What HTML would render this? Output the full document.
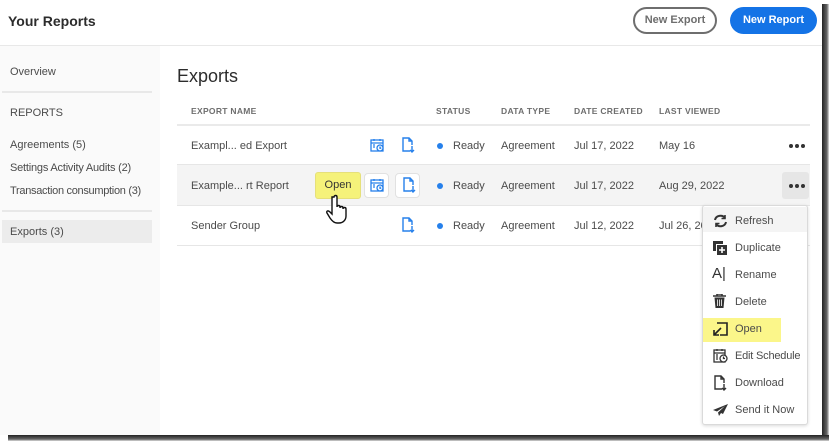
<!DOCTYPE html>
<html><head><meta charset="utf-8"><style>
*{margin:0;padding:0;box-sizing:border-box}
body{width:830px;height:443px;background:#fff;font-family:"Liberation Sans",sans-serif;color:#4b4b4b;position:relative;overflow:hidden}
.a{position:absolute;white-space:nowrap}
.frame{position:absolute;left:0;top:0;width:822px;height:435px;background:#fff;overflow:hidden}
.shr{position:absolute;left:822px;top:4px;width:7px;height:437px;background:linear-gradient(90deg,#222,#666 70%,#ddd)}
.shb{position:absolute;left:8px;top:435px;width:821px;height:6px;background:linear-gradient(180deg,#222,#666 70%,#ddd)}
.t{font-size:11px;color:#4b4b4b}
.h{font-size:8.5px;font-weight:bold;color:#6e6e6e;letter-spacing:.3px}
.dot{width:6px;height:6px;border-radius:50%;background:#2680eb}
.ib{position:absolute;width:25px;height:25px;border:1px solid #e1e1e1;border-radius:4px;background:#fff}
.mi{font-size:11px;color:#4b4b4b;position:absolute;left:32px}
.dots{position:absolute;display:flex;gap:2px}
.dots i{width:4px;height:4px;border-radius:50%;background:#333}
</style></head><body>
<div class="frame">
 <div class="a" style="left:8px;top:13px;font-size:14px;font-weight:bold;color:#2c2c2c">Your Reports</div>
 <div class="a" style="left:633px;top:7px;width:84px;height:27px;border:2px solid #6e6e6e;border-radius:14px;font-size:11px;font-weight:bold;color:#6e6e6e;text-align:center;line-height:23px">New Export</div>
 <div class="a" style="left:730px;top:7px;width:87px;height:27px;background:#1473e6;border-radius:14px;font-size:11px;font-weight:bold;color:#fff;text-align:center;line-height:27px">New Report</div>
 <div class="a" style="left:0;top:45px;width:822px;height:1px;background:#e8e8e8"></div>
 <div class="a" style="left:0;top:46px;width:160px;height:389px;background:#fafafa"></div>
 <div class="a t" style="left:10px;top:66px">Overview</div>
 <div class="a" style="left:2px;top:91px;width:150px;height:2px;background:#e8e8e8"></div>
 <div class="a t" style="left:10px;top:107px">REPORTS</div>
 <div class="a t" style="left:10px;top:139px">Agreements (5)</div>
 <div class="a t" style="left:10px;top:162px;letter-spacing:-.2px">Settings Activity Audits (2)</div>
 <div class="a t" style="left:10px;top:185px;letter-spacing:-.3px">Transaction consumption (3)</div>
 <div class="a" style="left:2px;top:210px;width:150px;height:2px;background:#e8e8e8"></div>
 <div class="a" style="left:2px;top:220px;width:150px;height:23px;background:#ececec"></div>
 <div class="a t" style="left:10px;top:226px">Exports (3)</div>

 <div class="a" style="left:177px;top:66px;font-size:18px;color:#2c2c2c">Exports</div>
 <div class="a h" style="left:191px;top:106px">EXPORT NAME</div>
 <div class="a h" style="left:436px;top:106px">STATUS</div>
 <div class="a h" style="left:501px;top:106px">DATA TYPE</div>
 <div class="a h" style="left:574px;top:106px">DATE CREATED</div>
 <div class="a h" style="left:659px;top:106px">LAST VIEWED</div>
 <div class="a" style="left:177px;top:124px;width:633px;height:2px;background:#eaeaea"></div>
 <div class="a" style="left:177px;top:165px;width:633px;height:40px;background:#f4f4f4"></div>
 <div class="a" style="left:177px;top:164px;width:633px;height:1px;background:#e6e6e6"></div>
 <div class="a" style="left:177px;top:205px;width:633px;height:1px;background:#e6e6e6"></div>
 <div class="a" style="left:177px;top:245px;width:633px;height:1px;background:#e6e6e6"></div>

 <div class="a t" style="left:191px;top:140px">Exampl...  ed Export</div>
 <div class="a t" style="left:191px;top:180px">Example... rt Report</div>
 <div class="a t" style="left:191px;top:220px">Sender Group</div>
 <div class="a" style="left:315px;top:172px;width:46px;height:27px;background:#f5f27a;border:1px solid #e6e07a;border-radius:3px;font-size:11px;color:#333;text-align:center;line-height:25px">Open</div>
 <div class="ib" style="left:364px;top:173px"></div>
 <div class="ib" style="left:395px;top:173px"></div>
 <svg class="a" style="left:370px;top:138px" width="15" height="15" viewBox="0 0 15 15" fill="none" stroke="#2680eb" stroke-width="1.3"><rect x="1" y="2" width="12" height="11"/><path d="M1 5h12M4 1v2M10 1v2M3 7h2M3 9h2"/><circle cx="10" cy="10" r="3" fill="#fff"/><path d="M10 8.5v1.7h1.3"/></svg>
 <svg class="a" style="left:370px;top:178px" width="15" height="15" viewBox="0 0 15 15" fill="none" stroke="#2680eb" stroke-width="1.3"><rect x="1" y="2" width="12" height="11"/><path d="M1 5h12M4 1v2M10 1v2M3 7h2M3 9h2"/><circle cx="10" cy="10" r="3" fill="#fff"/><path d="M10 8.5v1.7h1.3"/></svg>
 <svg class="a" style="left:401px;top:137px" width="14" height="16" viewBox="0 0 14 16" fill="none" stroke="#2680eb" stroke-width="1.4"><path d="M9 14H2V1h6l3 3v4M8 1v3h3M11 9v6M9 13l2 2 2-2"/></svg>
 <svg class="a" style="left:402px;top:177px" width="14" height="16" viewBox="0 0 14 16" fill="none" stroke="#2680eb" stroke-width="1.4"><path d="M9 14H2V1h6l3 3v4M8 1v3h3M11 9v6M9 13l2 2 2-2"/></svg>
 <svg class="a" style="left:401px;top:217px" width="14" height="16" viewBox="0 0 14 16" fill="none" stroke="#2680eb" stroke-width="1.4"><path d="M9 14H2V1h6l3 3v4M8 1v3h3M11 9v6M9 13l2 2 2-2"/></svg>
 <svg class="a" style="left:326px;top:194px" width="26" height="32" viewBox="0 0 26 32"><path d="M8 3c0-2 3-2 3 0v10c0-2 3-2 3 0v1c0-2 3-2 3 0v1c0-2 3-2 3 0v7c0 4-3 7-7 7h-2c-3 0-5-2-7-5l-3-5c-1-2 1-3 3-1l2 2V3z" fill="#fff" stroke="#111" stroke-width="1.4"/></svg>

 <div class="a dot" style="left:437px;top:143px"></div>
 <div class="a dot" style="left:437px;top:183px"></div>
 <div class="a dot" style="left:437px;top:223px"></div>
 <div class="a t" style="left:453px;top:140px">Ready</div>
 <div class="a t" style="left:453px;top:180px">Ready</div>
 <div class="a t" style="left:453px;top:220px">Ready</div>
 <div class="a t" style="left:501px;top:140px">Agreement</div>
 <div class="a t" style="left:501px;top:180px">Agreement</div>
 <div class="a t" style="left:501px;top:220px">Agreement</div>
 <div class="a t" style="left:574px;top:140px">Jul 17, 2022</div>
 <div class="a t" style="left:574px;top:180px">Jul 17, 2022</div>
 <div class="a t" style="left:574px;top:220px">Jul 12, 2022</div>
 <div class="a t" style="left:659px;top:140px">May 16</div>
 <div class="a t" style="left:659px;top:180px">Aug 29, 2022</div>
 <div class="a t" style="left:659px;top:220px">Jul 26, 2022</div>
 <div class="dots" style="left:789px;top:144px"><i></i><i></i><i></i></div>
 <div class="a" style="left:782px;top:172px;width:27px;height:27px;background:#e6e6e6;border-radius:3px"></div>
 <div class="dots" style="left:789px;top:184px"><i></i><i></i><i></i></div>

 <div class="a" style="left:702px;top:205px;width:106px;height:220px;background:#fff;border:1px solid #dadada;border-radius:3px;box-shadow:0 1px 3px rgba(0,0,0,.15)">
  <div class="a" style="left:0;top:1px;width:104px;height:25px;background:#f4f4f4"></div>
  <div class="a" style="left:0;top:112px;width:78px;height:24px;background:#fbf68a"></div>
  <svg class="a" style="left:10px;top:8px" width="15" height="14" viewBox="0 0 15 14" fill="none" stroke="#333" stroke-width="2"><path d="M2 6a5.5 5 0 0 1 10-2M13 8a5.5 5 0 0 1-10 2"/><path d="M12 1v3.5H8.5M3 13V9.5h3.5" stroke-width="1.6"/></svg>
  <div class="mi" style="top:9px">Refresh</div>
  <svg class="a" style="left:10px;top:35px" width="14" height="14" viewBox="0 0 14 14"><path d="M0 0h10v3H3v7H0z" fill="#333"/><rect x="4" y="4" width="10" height="10" fill="#333"/><path d="M9 6v6M6 9h6" stroke="#fff" stroke-width="1.6"/></svg>
  <div class="mi" style="top:36px">Duplicate</div>
  <div class="a" style="left:9px;top:59px;font-size:15px;color:#333">A|</div>
  <div class="mi" style="top:63px">Rename</div>
  <svg class="a" style="left:10px;top:88px" width="13" height="14" viewBox="0 0 13 14"><path d="M0 2h13M4 2V0h5v2" stroke="#333" stroke-width="1.6" fill="none"/><path d="M1.5 3.5h10l-1 10.5h-8z" fill="#333"/><path d="M4.5 5.5v6.5M6.5 5.5v6.5M8.5 5.5v6.5" stroke="#fff" stroke-width=".8"/></svg>
  <div class="mi" style="top:90px">Delete</div>
  <svg class="a" style="left:10px;top:116px" width="15" height="14" viewBox="0 0 15 14" fill="none" stroke="#222" stroke-width="1.6"><path d="M4 1h10v12H7M1 13l7-7M1 8v5h5"/></svg>
  <div class="mi" style="top:117px">Open</div>
  <svg class="a" style="left:10px;top:142px" width="15" height="15" viewBox="0 0 15 15" fill="none" stroke="#333" stroke-width="1.3"><rect x="1" y="2" width="11" height="12"/><path d="M1 5h11M4 1v2M9 1v2M3 7h2M3 9h2M3 11h2"/><circle cx="10.5" cy="10.5" r="3.5" fill="#fff"/><path d="M10.5 8.5v2h1.5"/></svg>
  <div class="mi" style="top:144px;letter-spacing:-.2px">Edit Schedule</div>
  <svg class="a" style="left:10px;top:169px" width="14" height="16" viewBox="0 0 14 16" fill="none" stroke="#333" stroke-width="1.4"><path d="M9 14H2V1h6l3 3v4M8 1v3h3M11 9v6M9 13l2 2 2-2"/></svg>
  <div class="mi" style="top:171px">Download</div>
  <svg class="a" style="left:10px;top:198px" width="15" height="12" viewBox="0 0 15 12"><path d="M15 0L0 6l4 1.5L12 2 5 8.5 6 12l2-3 2 1z" fill="#333"/></svg>
  <div class="mi" style="top:198px">Send it Now</div>
 </div>
</div>
<div class="shr"></div>
<div class="shb"></div>
</body></html>
